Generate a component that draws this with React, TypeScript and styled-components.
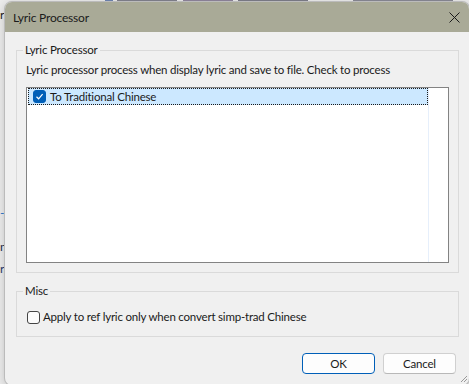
import React from "react";
import styled, { createGlobalStyle } from "styled-components";

const GlobalStyle = createGlobalStyle`
  html, body { margin: 0; padding: 0; }
  body {
    width: 469px;
    height: 384px;
    overflow: hidden;
    background: #eeeeee;
    font-family: Lato, "Noto Sans", sans-serif;
    font-size: 11.5px;
    letter-spacing: -0.2px;
    color: #1a1a1a;
  }
`;

const Desktop = styled.div`
  position: relative;
  width: 469px;
  height: 384px;
  overflow: hidden;
  background: #ececec;
`;

const Backdrop = styled.div`
  display: flex;
  flex-direction: column;
`;

const TopNoise = styled.div`
  height: 1px;
  display: flex;
`;

const NoiseSeg = styled.span<{ $w: number; $ml: number; $c: string }>`
  display: block;
  width: ${(p) => p.$w}px;
  margin-left: ${(p) => p.$ml}px;
  height: 1px;
  background: ${(p) => p.$c};
  opacity: 0.7;
`;

const EdgeText = styled.div<{ $mt: number; $c: string }>`
  margin-top: ${(p) => p.$mt}px;
  height: 16px;
  line-height: 16px;
  white-space: nowrap;
  color: ${(p) => p.$c};
  font-size: 12px;
`;

const Dialog = styled.div`
  position: absolute;
  left: 4px;
  top: 1px;
  width: 466px;
  height: 385px;
  box-sizing: border-box;
  border: 1px solid rgba(0, 0, 0, 0.22);
  border-radius: 8px;
  overflow: hidden;
  display: flex;
  flex-direction: column;
  background: #f0f0f0;
  box-shadow: 0 2px 10px rgba(0, 0, 0, 0.18);
`;

const TitleBar = styled.div`
  height: 30px;
  flex: none;
  background: #a9aa97;
  display: flex;
  align-items: center;
  padding: 0 0 0 8px;
`;

const Title = styled.div`
  flex: 1;
  font-size: 12px;
  color: #1b1b1b;
  line-height: 16px;
  padding-top: 1px;
`;

const CloseBtn = styled.div`
  width: 30px;
  height: 30px;
  display: flex;
  align-items: center;
  justify-content: center;
  margin-right: 0;
`;

const Body = styled.div`
  flex: 1;
  display: flex;
  flex-direction: column;
  padding: 10px 10px 0 11px;
  position: relative;
`;

const Group = styled.fieldset<{ $mt?: number; $pb?: number }>`
  margin: ${(p) => p.$mt ?? 0}px 0 0 0;
  border: 1px solid #dadada;
  padding: 0 9px ${(p) => p.$pb ?? 9}px 9px;
  min-width: 0;
  display: flex;
  flex-direction: column;
`;

const Legend = styled.legend`
  padding: 0 2px;
  margin-left: -3px;
  line-height: 16px;
  color: #1a1a1a;
`;

const Desc = styled.div`
  margin-top: 4px;
  line-height: 16px;
  color: #1a1a1a;
  white-space: nowrap;
`;

const ListBox = styled.div`
  margin-top: 9px;
  height: 176px;
  box-sizing: border-box;
  border: 1px solid #838383;
  background: #ffffff;
  display: flex;
`;

const Column = styled.div`
  width: 402px;
  box-sizing: border-box;
  border-right: 1px solid #e6effb;
  display: flex;
  flex-direction: column;
  padding-left: 1px;
`;

const Item = styled.div<{ $selected: boolean }>`
  height: 17px;
  box-sizing: border-box;
  display: flex;
  align-items: center;
  gap: 4px;
  padding-left: 4px;
  background: ${(p) => (p.$selected ? "#cce8ff" : "transparent")};
  border: 1px dotted ${(p) => (p.$selected ? "#1a1a1a" : "transparent")};
`;

const Box = styled.span<{ $checked: boolean }>`
  width: 13px;
  height: 13px;
  box-sizing: border-box;
  flex: none;
  border-radius: 3px;
  display: flex;
  align-items: center;
  justify-content: center;
  background: ${(p) => (p.$checked ? "#005fb8" : "#fbfbfb")};
  border: 1px solid ${(p) => (p.$checked ? "#005fb8" : "#444444")};
`;

const Label = styled.span`
  line-height: 16px;
  color: #1a1a1a;
  white-space: nowrap;
`;

const CheckRow = styled.div`
  margin-top: 10px;
  display: flex;
  align-items: center;
  gap: 3px;
  height: 16px;
  padding-left: 1px;
`;

const Buttons = styled.div`
  margin-top: 16px;
  margin-right: 3px;
  display: flex;
  justify-content: flex-end;
  gap: 8px;
`;

const Button = styled.button<{ $primary?: boolean }>`
  width: 73px;
  height: 21px;
  box-sizing: border-box;
  border-radius: 4px;
  background: #fdfdfd;
  border: 1px solid ${(p) => (p.$primary ? "#005fb8" : "#d0d0d0")};
  border-bottom-color: ${(p) => (p.$primary ? "#005fb8" : "#b8b8b8")};
  font-family: inherit;
  font-size: 11.5px;
  letter-spacing: -0.2px;
  color: #1a1a1a;
  padding: 0;
  line-height: 16px;
`;

const Grip = styled.svg`
  position: absolute;
  right: 1px;
  bottom: 2px;
`;

const Check = () => (
  <svg width="9" height="9" viewBox="0 0 9 9">
    <path d="M1.5 4.8 L3.6 6.8 L7.6 2.2" fill="none" stroke="#fff" strokeWidth="1.2" />
  </svg>
);

export default function App() {
  return (
    <>
      <GlobalStyle />
      <Desktop>
        <Backdrop>
          <TopNoise>
            <NoiseSeg $w={8} $ml={105} $c="#3a5a9a" />
            <NoiseSeg $w={60} $ml={4} $c="#555566" />
            <NoiseSeg $w={50} $ml={6} $c="#6a5a7a" />
            <NoiseSeg $w={70} $ml={5} $c="#505060" />
            <NoiseSeg $w={100} $ml={45} $c="#606070" />
          </TopNoise>
          <EdgeText $mt={6} $c="#222">r</EdgeText>
          <EdgeText $mt={182} $c="#2a72c8">-</EdgeText>
          <EdgeText $mt={18} $c="#1a2a4a">n</EdgeText>
          <EdgeText $mt={6} $c="#2a3a6a">r</EdgeText>
        </Backdrop>
        <Dialog>
          <TitleBar>
            <Title>Lyric Processor</Title>
            <CloseBtn>
              <svg width="11" height="11" viewBox="0 0 11 11">
                <path d="M0.5 0.5 L10.5 10.5 M10.5 0.5 L0.5 10.5" stroke="#1a1a1a" strokeWidth="1" fill="none" />
              </svg>
            </CloseBtn>
          </TitleBar>
          <Body>
            <Group>
              <Legend>Lyric Processor</Legend>
              <Desc>Lyric processor process when display lyric and save to file. Check to process</Desc>
              <ListBox>
                <Column>
                  <Item $selected>
                    <Box $checked>
                      <Check />
                    </Box>
                    <Label>To Traditional Chinese</Label>
                  </Item>
                </Column>
              </ListBox>
            </Group>
            <Group $mt={10} $pb={11}>
              <Legend>Misc</Legend>
              <CheckRow>
                <Box $checked={false} />
                <Label>Apply to ref lyric only when convert simp-trad Chinese</Label>
              </CheckRow>
            </Group>
            <Buttons>
              <Button $primary>OK</Button>
              <Button>Cancel</Button>
            </Buttons>
            <Grip width="8" height="8" viewBox="0 0 8 8">
              <path d="M7 1 L1 7 M7 4 L4 7" stroke="#9a9a9a" strokeWidth="1" />
            </Grip>
          </Body>
        </Dialog>
      </Desktop>
    </>
  );
}
